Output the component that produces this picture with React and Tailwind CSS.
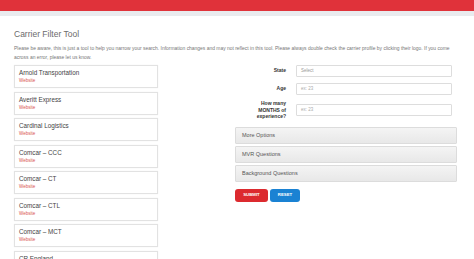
export default function App() {
  const carriers = [
    "Arnold Transportation",
    "Averitt Express",
    "Cardinal Logistics",
    "Comcar – CCC",
    "Comcar – CT",
    "Comcar – CTL",
    "Comcar – MCT",
    "CR England",
  ];
  return (
    <div className="w-[474px] h-[259px] overflow-hidden bg-white font-['Liberation_Sans',Arial,sans-serif]">
      <div className="h-[11px] bg-[#e0323a]" />
      <div className="h-[5px] bg-[#e9ebee]" />
      <div className="pl-[14px] pr-[14px]">
        <h1 className="mt-[13px] text-[8.5px] leading-[11px] text-[#6b6b6b]">Carrier Filter Tool</h1>
        <p className="mt-[5px] text-[4.95px] leading-[8.5px] text-[#777] w-[440px]">
          Please be aware, this is just a tool to help you narrow your search. Information changes and may not reflect in this tool. Please always double check the carrier profile by clicking their logo. If you come across an error, please let us know.
        </p>
        <div className="mt-[3px] flex">
          <div className="w-[144px] flex flex-col gap-[3.5px]">
            {carriers.map((c) => (
              <div key={c} className="h-[23px] border border-[#e2e2e2] shadow-[0_0_1px_rgba(0,0,0,0.08)] pl-[4px] pt-[3px]">
                <div className="text-[6.3px] leading-[8px] text-[#444]">{c}</div>
                <div className="text-[4.5px] leading-[7px] text-[#d9534f]">Website</div>
              </div>
            ))}
          </div>
          <div className="ml-[77px] w-[222px] flex flex-col">
            <div className="flex items-center h-[12px]">
              <div className="w-[51px] text-right text-[5px] font-bold text-[#333]">State</div>
              <div className="ml-[10px] w-[156px] h-[12px] border border-[#ddd] rounded-[1px] flex items-center pl-[4px] text-[4.5px] text-[#999]">Select</div>
            </div>
            <div className="mt-[6px] flex items-center h-[12px]">
              <div className="w-[51px] text-right text-[5px] font-bold text-[#333]">Age</div>
              <div className="ml-[10px] w-[156px] h-[12px] border border-[#ddd] rounded-[1px] flex items-center pl-[4px] text-[4.5px] text-[#aaa]">ex: 23</div>
            </div>
            <div className="mt-[5px] flex items-center h-[20px]">
              <div className="w-[51px] text-right text-[5px] leading-[6.5px] font-bold text-[#333]">How many<br />MONTHS of<br />experience?</div>
              <div className="ml-[10px] w-[156px] h-[12px] border border-[#ddd] rounded-[1px] flex items-center pl-[4px] text-[4.5px] text-[#aaa]">ex: 23</div>
            </div>
            <div className="mt-[7px] flex flex-col gap-[2px]">
              {["More Options", "MVR Questions", "Background Questions"].map((t) => (
                <div key={t} className="h-[17px] border border-[#dcdcdc] rounded-[1px] bg-gradient-to-b from-[#f4f4f4] to-[#e8e8e8] flex items-center pl-[6px] text-[5.5px] text-[#555]">{t}</div>
              ))}
            </div>
            <div className="mt-[7px] flex gap-[2px]">
              <div className="w-[33px] h-[13px] rounded-[3px] bg-[#dc2a2f] flex items-center justify-center text-[4.3px] font-bold text-white">SUBMIT</div>
              <div className="w-[30px] h-[13px] rounded-[3px] bg-[#1a82d3] flex items-center justify-center text-[4.3px] font-bold text-white">RESET</div>
            </div>
          </div>
        </div>
      </div>
    </div>
  );
}
